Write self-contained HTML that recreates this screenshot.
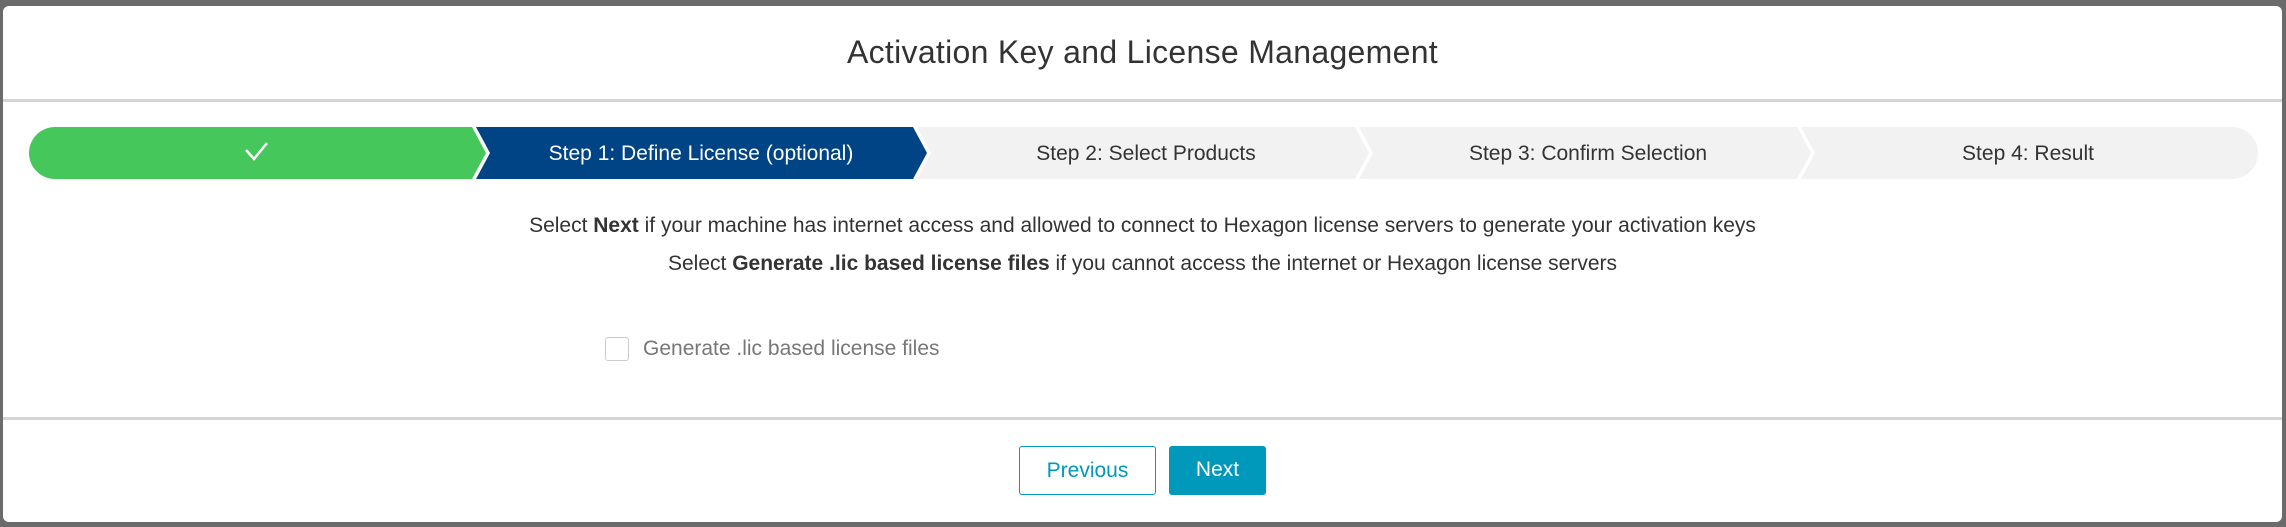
<!DOCTYPE html>
<html><head><style>
html,body{margin:0;padding:0;width:2286px;height:527px;background:#6b6b6b;overflow:hidden;font-family:"Liberation Sans",sans-serif}
.dlg{position:absolute;left:3px;top:6px;width:2279px;height:516px;background:#fff;border-radius:6px}
.title{position:absolute;left:0;right:0;top:28px;text-align:center;font-size:32px;color:#333;letter-spacing:0.3px}
.hr{position:absolute;left:0;right:0;height:3px;background:#d4d4d4}
.txt{position:absolute;left:0;right:0;text-align:center;font-size:21px;color:#333}
.btn{position:absolute;top:440px;height:49px;box-sizing:border-box;border-radius:3px;font-size:21px;line-height:47px;text-align:center}
</style></head><body>
<div class="dlg">
<div class="title">Activation Key and License Management</div>
<div class="hr" style="top:93px"></div>
<svg style="position:absolute;left:0;top:0" width="2279" height="200">
<g transform="translate(-3,-12)">
<path d="M55,133 H472 L486,159 L472,185 H55 A26,26 0 0 1 55,133 Z" fill="#45c75c"/>
<path d="M476,133 H913 L927,159 L913,185 H476 L490,159 Z" fill="#004485"/>
<path d="M917,133 H1355 L1369,159 L1355,185 H917 L931,159 Z" fill="#f2f2f2"/>
<path d="M1359,133 H1797 L1811,159 L1797,185 H1359 L1373,159 Z" fill="#f2f2f2"/>
<path d="M1801,133 H2232 A26,26 0 0 1 2232,185 H1801 L1815,159 Z" fill="#f2f2f2"/>
<path d="M246,156 L254,165 L267,149" fill="none" stroke="#fff" stroke-width="2.5"/>
<g font-family="Liberation Sans, sans-serif" font-size="21" text-anchor="middle">
<text x="701" y="166" fill="#fff">Step 1: Define License (optional)</text>
<text x="1146" y="166" fill="#333">Step 2: Select Products</text>
<text x="1588" y="166" fill="#333">Step 3: Confirm Selection</text>
<text x="2028" y="166" fill="#333">Step 4: Result</text>
</g></g></svg>
<div class="txt" style="top:208px">Select <b>Next</b> if your machine has internet access and allowed to connect to Hexagon license servers to generate your activation keys</div>
<div class="txt" style="top:246px">Select <b>Generate .lic based license files</b> if you cannot access the internet or Hexagon license servers</div>
<div style="position:absolute;left:602px;top:331px;width:24px;height:24px;box-sizing:border-box;border:1px solid #ccc;border-radius:3px"></div>
<div style="position:absolute;left:640px;top:331px;font-size:21px;color:#777">Generate .lic based license files</div>
<div class="hr" style="top:411px"></div>
<div class="btn" style="left:1016px;width:137px;border:1.5px solid #0099bb;color:#0099bb">Previous</div>
<div class="btn" style="left:1166px;width:97px;background:#0099bb;color:#fff">Next</div>
</div>
</body></html>
